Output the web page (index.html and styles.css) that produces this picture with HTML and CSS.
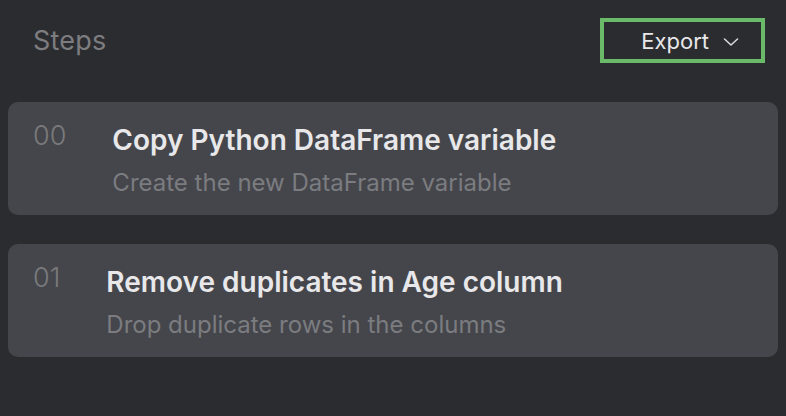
FILE: index.html
```html
<!DOCTYPE html>
<html>
<head>
<meta charset="utf-8">
<link rel="stylesheet" href="styles.css">
</head>
<body>
<div class="panel">
  <header class="header">
    <h1 class="title">Steps</h1>
    <button class="export">
      <span>Export</span>
      <svg class="chev" width="16" height="10" viewBox="0 0 16 10"><path d="M1.5 2 L8 8 L14.5 2" fill="none" stroke="#d8d8dc" stroke-width="1.6" stroke-linecap="round" stroke-linejoin="round"/></svg>
    </button>
  </header>
  <div class="steps">
    <div class="step">
      <div class="num">00</div>
      <div class="body">
        <div class="step-title">Copy Python DataFrame variable</div>
        <div class="step-desc">Create the new DataFrame variable</div>
      </div>
    </div>
    <div class="step">
      <div class="num">01</div>
      <div class="body">
        <div class="step-title">Remove duplicates in Age column</div>
        <div class="step-desc">Drop duplicate rows in the columns</div>
      </div>
    </div>
  </div>
</div>
</body>
</html>
```

FILE: styles.css
```css
html, body {
  margin: 0;
  padding: 0;
  background: #2b2c30;
  width: 786px;
  height: 416px;
  overflow: hidden;
  font-family: Inter, "Noto Sans", sans-serif;
}
.panel {
  padding: 18px 8px 0 8px;
}
.header {
  display: flex;
  justify-content: space-between;
  align-items: center;
  height: 45px;
  padding-left: 25px;
  padding-right: 13px;
}
.title {
  margin: 0;
  font-size: 27px;
  font-weight: 400;
  color: #7d7d80;
  letter-spacing: 0.2px;
}
.export {
  box-sizing: border-box;
  width: 165px;
  height: 45px;
  border: 4px solid #6aba6a;
  background: transparent;
  display: flex;
  align-items: center;
  justify-content: flex-end;
  gap: 14px;
  padding: 0 22px 0 0;
  color: #e8e8ea;
  font-family: Inter, "Noto Sans", sans-serif;
  font-size: 22px;
  font-weight: 400;
}
.chev { margin-top: 2px; }
.steps {
  margin-top: 39px;
  display: flex;
  flex-direction: column;
  gap: 29px;
}
.step {
  background: #45464b;
  border-radius: 10px;
  height: 113px;
  box-sizing: border-box;
  padding: 20px 25px 0 25px;
  display: flex;
  gap: 46px;
}
.num {
  font-size: 27px;
  font-weight: 300;
  color: #7a7a7c;
  line-height: 28px;
}
.body {
  padding-top: 1px;
}
.step-title {
  font-size: 28px;
  font-weight: 600;
  color: #e8e8ea;
  line-height: 34px;
}
.step-desc {
  margin-top: 11px;
  font-size: 24px;
  color: #7b7c80;
  line-height: 29px;
}
```
